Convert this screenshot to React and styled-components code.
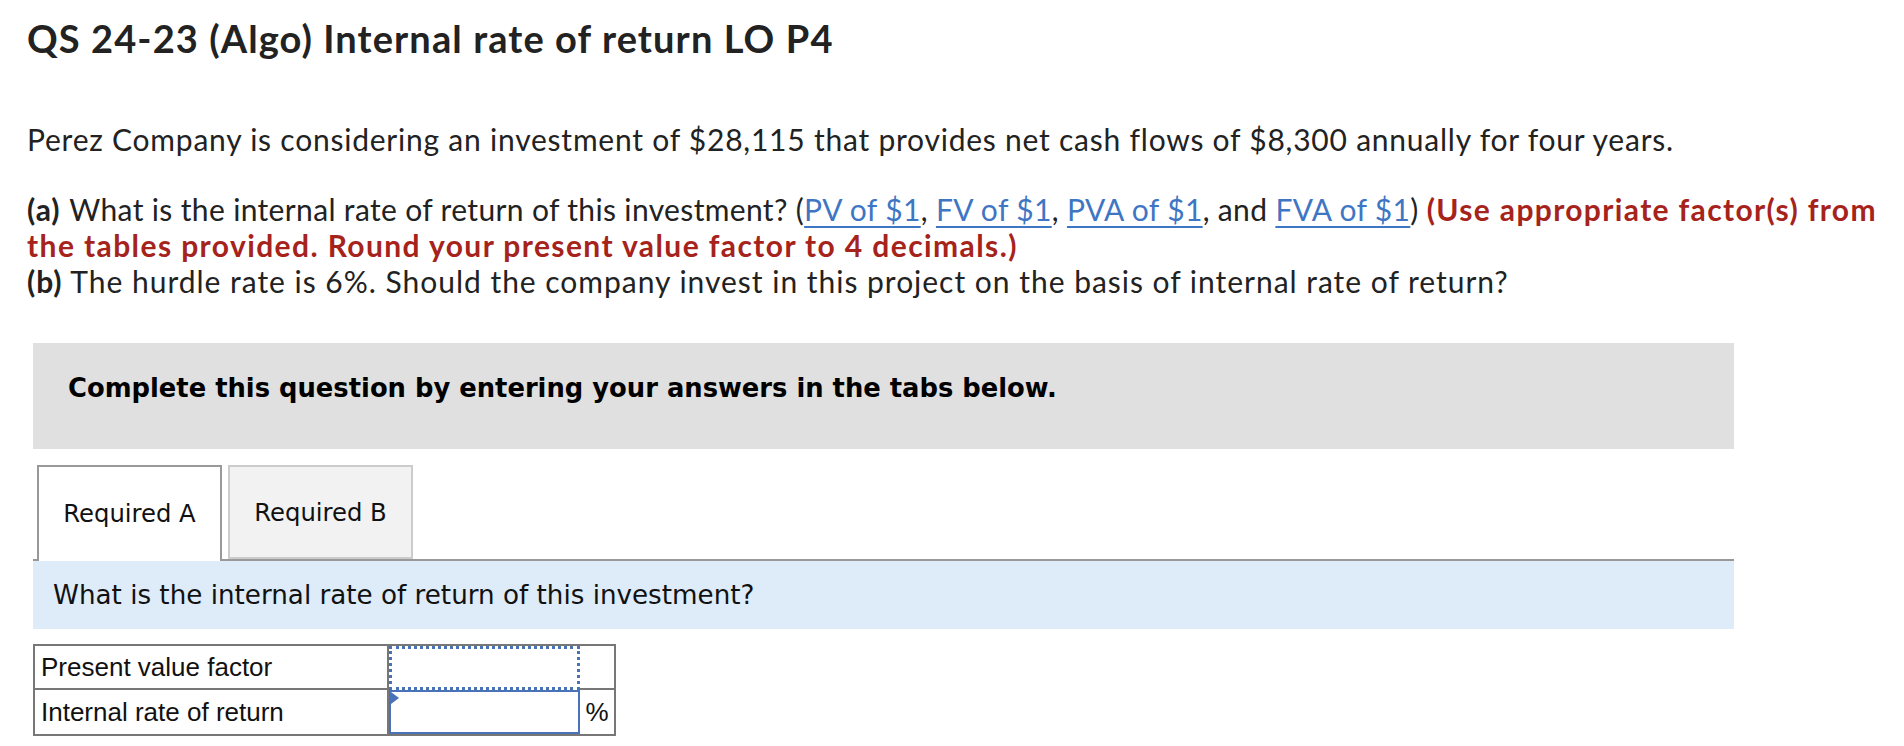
import React from "react";
import styled, { createGlobalStyle } from "styled-components";

const GlobalStyle = createGlobalStyle`
  body {
    margin: 0;
    background: #fff;
  }
`;

const Page = styled.div`
  padding: 16px 0 0 27px;
  font-family: Lato, "Liberation Sans", sans-serif;
  color: #222;
`;

const Title = styled.h1`
  margin: 0;
  font-size: 38px;
  font-weight: 700;
  line-height: 44px;
  letter-spacing: 1.1px;
  color: #222;
`;

const Para = styled.p`
  margin: ${(p) => p.$top || 0}px 0 0;
  font-size: 30px;
  line-height: 36px;
  letter-spacing: ${(p) => p.$ls ?? 0.9}px;
  white-space: nowrap;
`;

const Span = styled.span`
  letter-spacing: ${(p) => p.$ls}px;
`;

const Bold = styled.strong`
  font-weight: 700;
`;

const Note = styled.strong`
  font-weight: 700;
  color: #a6231c;
  letter-spacing: ${(p) => p.$ls ?? 0.9}px;
`;

const Link = styled.a`
  color: #3f76c4;
  text-decoration: underline;
  text-decoration-thickness: 2px;
  text-underline-offset: 5px;
  cursor: pointer;
`;

const Instructions = styled.div`
  margin: 44px 0 0 6px;
  width: 1701px;
  height: 106px;
  box-sizing: border-box;
  padding: 0 0 16px 35px;
  display: flex;
  align-items: center;
  background: #e0e0e0;
  font-family: "DejaVu Sans", Verdana, sans-serif;
  font-weight: 700;
  font-size: 25.8px;
  color: #000;
`;

const TabBar = styled.div`
  margin: 16px 0 0 6px;
  width: 1701px;
  box-sizing: border-box;
  padding-left: 4px;
  display: flex;
  align-items: flex-start;
  gap: 6px;
  border-bottom: 2px solid #999;
`;

const Tab = styled.div`
  width: 185px;
  height: ${(p) => (p.$active ? 96 : 94)}px;
  margin-bottom: ${(p) => (p.$active ? -2 : 0)}px;
  box-sizing: border-box;
  display: flex;
  align-items: center;
  justify-content: center;
  padding-bottom: ${(p) => (p.$active ? 2 : 0)}px;
  background: ${(p) => (p.$active ? "#fff" : "#f2f2f2")};
  border: 2px solid ${(p) => (p.$active ? "#999" : "#ccc")};
  border-bottom: ${(p) => (p.$active ? "none" : "2px solid #ccc")};
  font-family: "DejaVu Sans", Verdana, sans-serif;
  font-size: 24.3px;
  color: #111;
  cursor: pointer;
`;

const Prompt = styled.div`
  margin-left: 6px;
  width: 1701px;
  height: 68px;
  box-sizing: border-box;
  padding-left: 20px;
  display: flex;
  align-items: center;
  background: #deebf8;
  font-family: "DejaVu Sans", Verdana, sans-serif;
  font-size: 26.2px;
  color: #111;
`;

const FormTable = styled.div`
  margin: 15px 0 0 6px;
  width: 583px;
  box-sizing: border-box;
  border: 2px solid #777;
  display: grid;
  grid-template-columns: 354px 191px 34px;
  grid-template-rows: 44px 44px;
  font-family: "Liberation Sans", Arial, sans-serif;
  font-size: 26px;
  color: #111;
`;

const LabelCell = styled.div`
  box-sizing: border-box;
  padding-left: 6px;
  display: flex;
  align-items: center;
  border-right: 2px solid #777;
  border-bottom: ${(p) => (p.$first ? "2px solid #777" : "none")};
`;

const InputCell = styled.div`
  position: relative;
  display: flex;
`;

const Entry = styled.input`
  width: 100%;
  height: 100%;
  box-sizing: border-box;
  margin: 0;
  padding: 0 6px;
  border: ${(p) => (p.$focused ? "3px dotted" : "2px solid")} #4a72b8;
  background: #fff;
  font: inherit;
  outline: none;
`;

const Flag = styled.span`
  position: absolute;
  top: 2px;
  left: 2px;
  width: 0;
  height: 0;
  border-top: 6px solid transparent;
  border-bottom: 6px solid transparent;
  border-left: 8px solid #4a72b8;
  pointer-events: none;
`;

const UnitCell = styled.div`
  box-sizing: border-box;
  display: flex;
  align-items: center;
  justify-content: center;
  border-bottom: ${(p) => (p.$first ? "2px solid #777" : "none")};
`;

export default function App() {
  return (
    <>
      <GlobalStyle />
      <Page>
        <Title>QS 24-23 (Algo) Internal rate of return LO P4</Title>

        <Para $top={61} $ls={0.77}>
          Perez Company is considering an investment of $28,115 that provides
          net cash flows of $8,300 annually for four years.
        </Para>

        <Para $top={34} $ls={0.98}>
          <Bold>(a)</Bold>{" "}
          <Span $ls={0.35}>
            What is the internal rate of return of this investment? (
            <Link>PV of $1</Link>, <Link>FV of $1</Link>,{" "}
            <Link>PVA of $1</Link>, and <Link>FVA of $1</Link>){" "}
          </Span>
          <Note $ls={1.35}>(Use appropriate factor(s) from</Note>
          <br />
          <Note $ls={1.4}>
            the tables provided. Round your present value factor to 4
            decimals.)
          </Note>
          <br />
          <Bold>(b)</Bold> The hurdle rate is 6%. Should the company invest in
          this project on the basis of internal rate of return?
        </Para>

        <Instructions>
          Complete this question by entering your answers in the tabs below.
        </Instructions>

        <TabBar>
          <Tab $active>Required A</Tab>
          <Tab>Required B</Tab>
        </TabBar>

        <Prompt>What is the internal rate of return of this investment?</Prompt>

        <FormTable>
          <LabelCell $first>Present value factor</LabelCell>
          <InputCell>
            <Entry $focused aria-label="Present value factor" />
          </InputCell>
          <UnitCell $first />

          <LabelCell>Internal rate of return</LabelCell>
          <InputCell>
            <Entry aria-label="Internal rate of return" />
            <Flag />
          </InputCell>
          <UnitCell>%</UnitCell>
        </FormTable>
      </Page>
    </>
  );
}
